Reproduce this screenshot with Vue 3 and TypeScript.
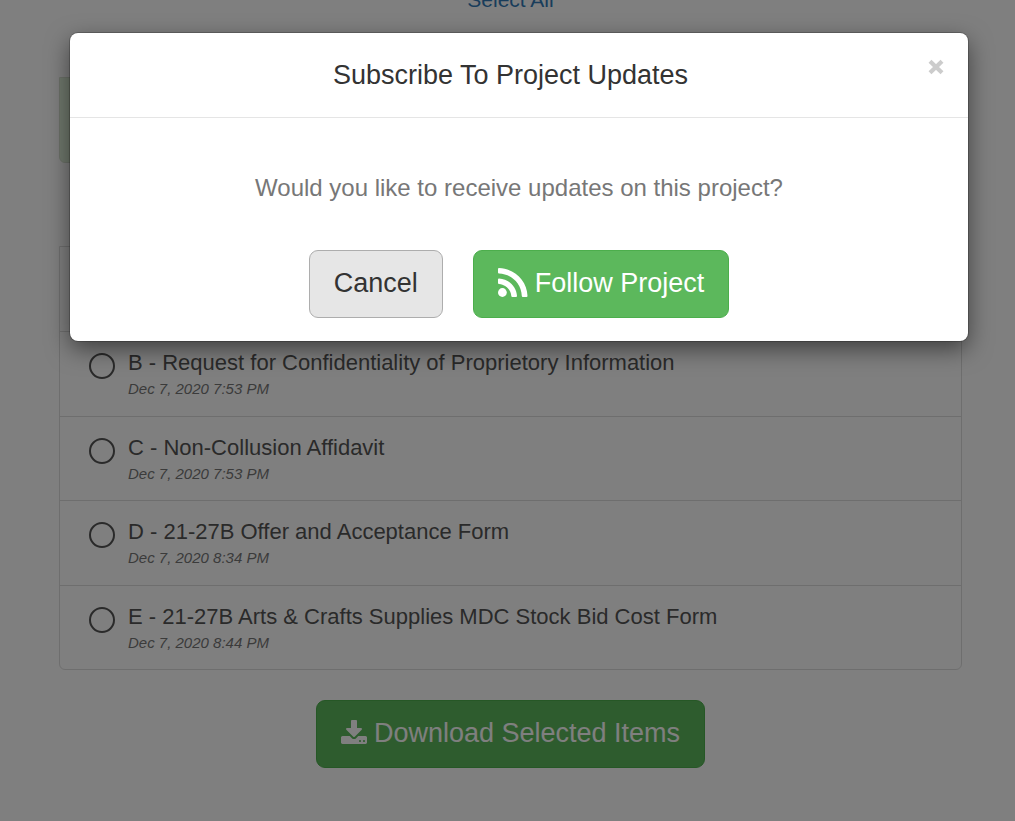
<script setup lang="ts">
import { ref } from 'vue'

interface BidDocument {
  id: string
  name: string
  uploaded: string
}

const documents: BidDocument[] = [
  { id: 'b', name: 'B - Request for Confidentiality of Proprietory Information', uploaded: 'Dec 7, 2020 7:53 PM' },
  { id: 'c', name: 'C - Non-Collusion Affidavit', uploaded: 'Dec 7, 2020 7:53 PM' },
  { id: 'd', name: 'D - 21-27B Offer and Acceptance Form', uploaded: 'Dec 7, 2020 8:34 PM' },
  { id: 'e', name: 'E - 21-27B Arts & Crafts Supplies MDC Stock Bid Cost Form', uploaded: 'Dec 7, 2020 8:44 PM' },
]

const selected = ref<string[]>([])
const open = ref(true)

function selectAll() {
  selected.value = documents.map((d) => d.id)
}
</script>

<template>
  <div class="screen">
    <main class="page">
      <a class="select-all" href="#" @click.prevent="selectAll">Select All</a>
      <div class="notice"></div>
      <ul class="documents">
        <li class="row"></li>
        <li v-for="doc in documents" :key="doc.id" class="row">
          <input :id="doc.id" v-model="selected" class="tick" type="checkbox" :value="doc.id" />
          <label class="text" :for="doc.id">
            <span class="name">{{ doc.name }}</span>
            <em class="date">{{ doc.uploaded }}</em>
          </label>
        </li>
      </ul>
      <button class="btn green download" type="button">
        <svg class="icon icon-download" viewBox="0 0 1664 1536" aria-hidden="true">
          <path fill="currentColor" d="M1280 1344q0-26-19-45t-45-19-45 19-19 45 19 45 45 19 45-19 19-45zm256 0q0-26-19-45t-45-19-45 19-19 45 19 45 45 19 45-19 19-45zm128-224v320q0 40-28 68t-68 28h-1472q-40 0-68-28t-28-68v-320q0-40 28-68t68-28h465l135 136q58 56 136 56t136-56l136-136h464q40 0 68 28t28 68zm-325-569q17 41-14 70l-448 448q-18 19-45 19t-45-19l-448-448q-31-29-14-70 17-39 59-39h256v-448q0-26 19-45t45-19h256q26 0 45 19t19 45v448h256q42 0 59 39z" />
        </svg>
        <span>Download Selected Items</span>
      </button>
    </main>

    <div v-if="open" class="backdrop">
      <section class="dialog" role="dialog" aria-modal="true" aria-labelledby="dialog-title">
        <header class="head">
          <h4 id="dialog-title" class="title">Subscribe To Project Updates</h4>
          <button class="close" type="button" aria-label="Close" @click="open = false">
            <svg class="icon-close" viewBox="0 0 16 16" aria-hidden="true">
              <path d="M2 2.200L14 13.800M14 2.200L2 13.800" stroke="currentColor" stroke-width="4.200" />
            </svg>
          </button>
        </header>
        <div class="body">
          <p class="question">Would you like to receive updates on this project?</p>
          <div class="actions">
            <button class="btn grey" type="button" @click="open = false">Cancel</button>
            <button class="btn green" type="button">
              <svg class="icon icon-feed" viewBox="0 0 30 29" aria-hidden="true">
                <circle cx="4.400" cy="24.500" r="4.400" fill="currentColor" />
                <path
                  fill="currentColor"
                  d="M0 11.500Q0 10.500 1 10.500C11 11 18.500 18.500 19 28Q19 29 18 29H14.300Q13.400 29 13.300 28C12.800 21.500 7.500 16.500 1 16Q0 15.900 0 15zM0 1Q0 0 1 0C16.500 .5 29 12.500 29.500 28Q29.500 29 28.500 29H24.800Q23.900 29 23.800 28C23.300 15.700 13.500 6 1 5.500Q0 5.400 0 4.500z"
                />
              </svg>
              <span>Follow Project</span>
            </button>
          </div>
        </div>
      </section>
    </div>
  </div>
</template>

<style>
body {
  background: #fff;
}
</style>

<style scoped>
.screen {
  position: relative;
  min-height: 100vh;
  overflow: hidden;
  font-family: "Liberation Sans", Arial, sans-serif;
  color: #333;
}

.page {
  display: flex;
  flex-direction: column;
  align-items: center;
  margin-top: -15px;
  padding: 0 53px 0 59px;
}

.select-all {
  font-size: 21px;
  line-height: 30px;
  color: #337ab7;
  text-decoration: none;
}

.notice {
  box-sizing: border-box;
  width: 100%;
  height: 86px;
  margin-top: 62px;
  border: 1px solid #d6e1d0;
  border-radius: 0 0 6px 6px;
  background: #dff0d8;
}

.documents {
  box-sizing: border-box;
  display: grid;
  grid-auto-rows: 1fr;
  width: 100%;
  min-height: 424px;
  margin: 83px 0 30px;
  padding: 0;
  list-style: none;
  border: 1px solid #ddd;
  border-radius: 0 0 6px 6px;
}

.row {
  display: flex;
  align-items: flex-start;
  gap: 13px;
  padding: 16px 29px 0;
}

.row + .row {
  border-top: 1px solid #ddd;
}

.tick {
  appearance: none;
  box-sizing: border-box;
  flex: none;
  width: 26px;
  height: 26px;
  margin: 5px 0 0;
  border: 2px solid #555;
  border-radius: 50%;
}

.tick:checked {
  background: #5cb85c;
}

.text {
  display: flex;
  flex-direction: column;
}

.name {
  font-size: 22px;
  line-height: 30px;
  color: #555;
}

.date {
  font-size: 15px;
  line-height: 22px;
  color: #777;
}

.btn {
  display: flex;
  align-items: center;
  gap: 7px;
  min-height: 68px;
  padding: 0 24px 2px;
  border: 1px solid;
  border-radius: 9px;
  font-family: inherit;
  font-size: 27px;
  line-height: 36px;
}

.green {
  background: #5cb85c;
  border-color: #4cae4c;
  color: #fff;
}

.grey {
  background: #e6e6e6;
  border-color: #adadad;
  color: #333;
}

.icon {
  margin-bottom: 2px;
}

.icon-download {
  width: 26px;
  height: 24px;
}

.icon-feed {
  width: 30px;
  height: 29px;
}

.backdrop {
  position: absolute;
  inset: 0;
  padding: 33px 47px 0 70px;
  background: rgba(0, 0, 0, 0.5);
}

.dialog {
  border-radius: 8px;
  background: #fff;
  box-shadow: 0 0 0 1px rgba(0, 0, 0, 0.2), 0 8px 23px rgba(0, 0, 0, 0.5);
}

.head {
  display: flex;
  align-items: flex-start;
  padding: 22px 24px 22px 23px;
  border-bottom: 1px solid #e5e5e5;
}

.title {
  flex: 1;
  margin: 0;
  font-size: 27px;
  line-height: 40px;
  font-weight: 400;
  text-align: center;
}

.close {
  display: flex;
  align-items: center;
  height: 24px;
  padding: 0;
  border: 0;
  background: none;
  color: #ccc;
}

.icon-close {
  width: 16px;
  height: 16px;
}

.body {
  padding: 53px 23px 23px;
}

.question {
  margin: 0;
  font-size: 24px;
  line-height: 34px;
  text-align: center;
  color: #777;
}

.actions {
  display: flex;
  justify-content: center;
  gap: 30px;
  margin-top: 45px;
}
</style>
